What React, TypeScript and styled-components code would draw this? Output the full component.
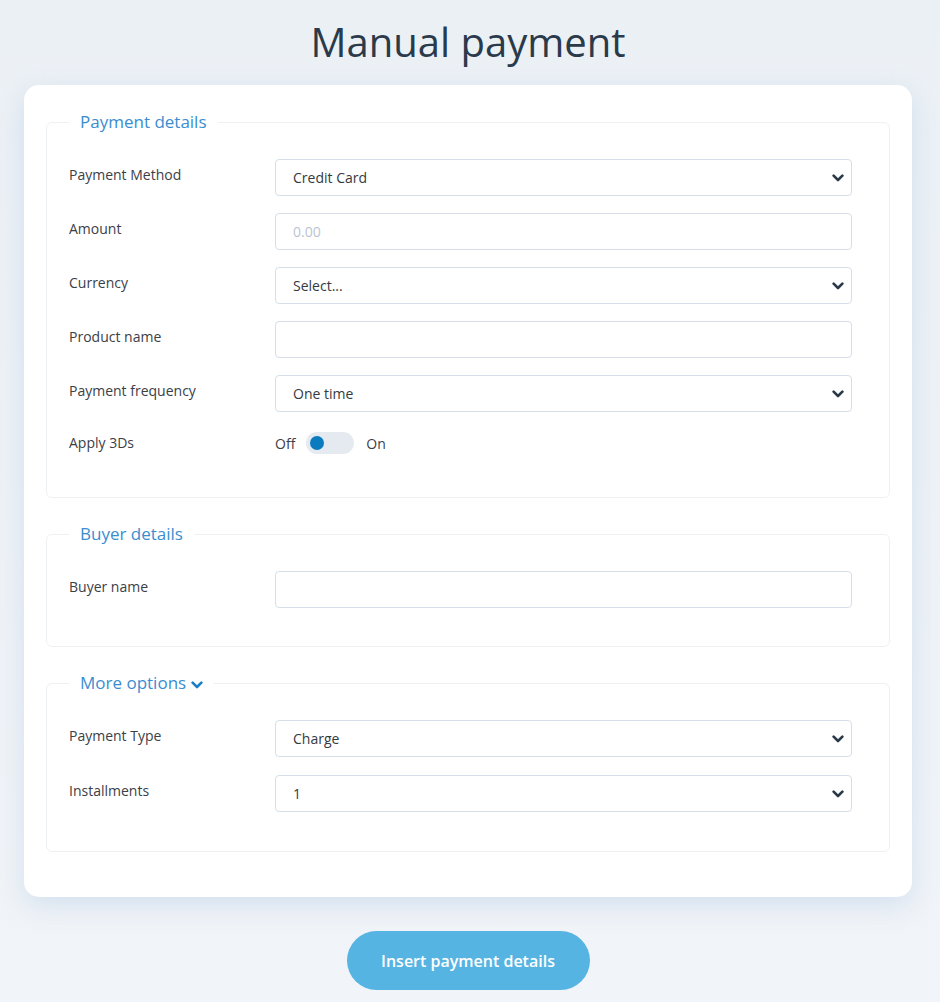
import React, { FC, useState } from "react";
import styled, { createGlobalStyle } from "styled-components";

const chevron = (color: string) =>
  `url("data:image/svg+xml,${encodeURIComponent(
    `<svg xmlns='http://www.w3.org/2000/svg' width='12' height='8' viewBox='0 0 12 8'><path d='M1.6 1.6 6 6 10.4 1.6' fill='none' stroke='${color}' stroke-width='2.6' stroke-linecap='round' stroke-linejoin='round'/></svg>`
  )}")`;

const App: FC = () => {
  const [secure, setSecure] = useState(false);

  return (
    <>
      <GlobalStyle />
      <Page>
        <Title>Manual payment</Title>
        <Card>
          <Section $bottom={40}>
            <Legend>Payment details</Legend>
            <Form>
              <Label>Payment Method</Label>
              <Select defaultValue="card">
                <option value="card">Credit Card</option>
              </Select>

              <Label>Amount</Label>
              <Input placeholder="0.00" />

              <Label>Currency</Label>
              <Select defaultValue="">
                <option value="">Select...</option>
              </Select>

              <Label>Product name</Label>
              <Input />

              <Label>Payment frequency</Label>
              <Select defaultValue="once">
                <option value="once">One time</option>
              </Select>

              <Label $centered>Apply 3Ds</Label>
              <SwitchRow>
                <SwitchText>Off</SwitchText>
                <Track
                  role="switch"
                  aria-checked={secure}
                  $on={secure}
                  onClick={() => setSecure(!secure)}
                >
                  <Knob />
                </Track>
                <SwitchText>On</SwitchText>
              </SwitchRow>
            </Form>
          </Section>

          <Section>
            <Legend>Buyer details</Legend>
            <Form>
              <Label>Buyer name</Label>
              <Input />
            </Form>
          </Section>

          <Section $bottom={39}>
            <Legend>
              More options
              <svg width="12" height="8" viewBox="0 0 12 8">
                <path
                  d="M1.6 1.6 6 6 10.4 1.6"
                  fill="none"
                  stroke="#1a7fc4"
                  strokeWidth="2.6"
                  strokeLinecap="round"
                  strokeLinejoin="round"
                />
              </svg>
            </Legend>
            <Form $gap={18}>
              <Label>Payment Type</Label>
              <Select defaultValue="charge">
                <option value="charge">Charge</option>
              </Select>

              <Label>Installments</Label>
              <Select defaultValue="1">
                <option value="1">1</option>
              </Select>
            </Form>
          </Section>
        </Card>
        <Submit type="button">Insert payment details</Submit>
      </Page>
    </>
  );
};

export default App;

const GlobalStyle = createGlobalStyle`
  html, body {
    margin: 0;
    padding: 0;
    background: linear-gradient(180deg, #ebf0f5 0%, #f1f4f8 100%);
    min-height: 100%;
  }
  body {
    font-family: "Open Sans", "Liberation Sans", sans-serif;
    color: #3b4047;
  }
  * {
    box-sizing: border-box;
  }
`;

const Page = styled.div`
  display: flex;
  flex-direction: column;
  align-items: center;
  min-height: 1002px;
  padding: 18px 28px 0 24px;
`;

const Title = styled.h1`
  margin: 0 0 19px;
  font-size: 40px;
  line-height: 48px;
  font-weight: 400;
  color: #2a3a4b;
`;

const Card = styled.div`
  width: 888px;
  display: flex;
  flex-direction: column;
  gap: 25px;
  padding: 26px 22px 45px;
  background: #fff;
  border-radius: 15px;
  box-shadow: 0 8px 26px rgba(175, 202, 228, 0.45);
`;

const Section = styled.fieldset<{ $bottom?: number }>`
  margin: 0;
  min-width: 0;
  padding: 26px 37px ${(props) => props.$bottom ?? 38}px 22px;
  border: 1px solid #eef1f4;
  border-radius: 6px;
`;

const Legend = styled.legend`
  display: flex;
  align-items: center;
  gap: 5px;
  padding: 0 11px;
  font-size: 17px;
  line-height: 22px;
  color: #3a8dd0;

  svg {
    margin-top: 3px;
  }
`;

const Form = styled.div<{ $gap?: number }>`
  display: grid;
  grid-template-columns: 206px 1fr;
  row-gap: ${(props) => props.$gap ?? 17}px;
`;

const Label = styled.div<{ $centered?: boolean }>`
  font-size: 14px;
  line-height: 20px;
  padding-top: ${(props) => (props.$centered ? 0 : 6)}px;
  align-self: ${(props) => (props.$centered ? "center" : "start")};
  color: #3b4047;
`;

const fieldBase = `
  width: 100%;
  height: 37px;
  padding: 0 17px;
  border: 1px solid #d6dfe9;
  border-radius: 4px;
  background-color: #fff;
  font-family: "Open Sans", "Liberation Sans", sans-serif;
  font-size: 14px;
  color: #343a40;
  outline: none;
`;

const Input = styled.input`
  ${fieldBase}

  &::placeholder {
    color: #b9c6d3;
  }
`;

const Select = styled.select`
  ${fieldBase}
  appearance: none;
  background-image: ${chevron("#2a3a4b")};
  background-repeat: no-repeat;
  background-position: right 7px center;
`;

const SwitchRow = styled.div`
  display: flex;
  align-items: center;
  gap: 11px;
  height: 28px;
`;

const SwitchText = styled.span`
  font-size: 14px;
  color: #3b4047;
`;

const Track = styled.div<{ $on: boolean }>`
  display: flex;
  align-items: center;
  justify-content: ${(props) => (props.$on ? "flex-end" : "flex-start")};
  width: 48px;
  height: 22px;
  padding: 0 4px;
  border-radius: 11px;
  background: #e5eaf0;
  cursor: pointer;
  margin-right: 1px;
`;

const Knob = styled.span`
  width: 14px;
  height: 14px;
  border-radius: 50%;
  background: #0a7bbf;
`;

const Submit = styled.button`
  margin-top: 34px;
  width: 243px;
  height: 59px;
  border: none;
  border-radius: 30px;
  background: #56b4e3;
  color: #fff;
  font-family: "Open Sans", "Liberation Sans", sans-serif;
  font-size: 16px;
  font-weight: 600;
  cursor: pointer;
`;
